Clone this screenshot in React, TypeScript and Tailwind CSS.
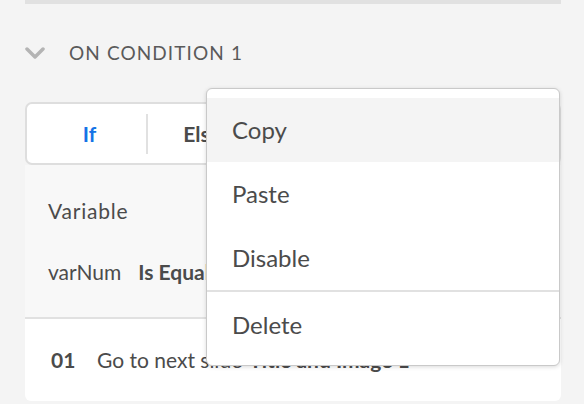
import React from 'react';

const font = { fontFamily: 'Lato, "Open Sans", sans-serif' };

function Chevron() {
  return (
    <svg width="20" height="12" viewBox="0 0 20 12" className="shrink-0">
      <polyline points="2,2 10,10 18,2" fill="none" stroke="#b4b4b4" strokeWidth="3.5" strokeLinecap="round" strokeLinejoin="round" />
    </svg>
  );
}

const menuItems = ['Copy', 'Paste', 'Disable'];

export default function App() {
  return (
    <div className="relative w-[584px] h-[404px] overflow-hidden bg-[#f4f4f4] text-[#4b4b4b]" style={font}>
      {/* top strip */}
      <div className="ml-[25px] w-[536px] h-[4px] bg-[#e1e1e1]" />

      {/* section header */}
      <div className="flex items-center h-[98px] pl-[25px] gap-[24px]">
        <Chevron />
        <span className="text-[19px] tracking-[1.1px] text-[#5a5a5a]">ON CONDITION 1</span>
      </div>

      {/* card */}
      <div className="ml-[25px] w-[536px]">
        <div className="flex items-center h-[63px] bg-white border-2 border-[#dedede] rounded-[7px]">
          <div className="w-[119px] pl-[6px] text-center text-[21px] font-bold text-[#1473e6]">If</div>
          <div className="w-[2px] h-[40px] bg-[#e1e1e1]" />
          <div className="w-[108px] text-center text-[21px] font-bold text-[#4b4b4b]">Else</div>
          <div className="w-[2px] h-[40px] bg-[#e1e1e1]" />
        </div>

        <div className="h-[154px] bg-[#f8f8f8] border-b-2 border-[#e1e1e1] pl-[23px] flex flex-col">
          <div className="mt-[32px] text-[21px] tracking-[0.8px] leading-[28px]">Variable</div>
          <div className="mt-[33px] flex items-center gap-[17px] text-[21px] leading-[28px]">
            <span>varNum</span>
            <span className="font-bold">Is Equal To</span>
            <span>5</span>
          </div>
        </div>

        <div className="h-[82px] bg-white rounded-b-[6px] flex items-center pl-[26px] text-[21px]">
          <span className="font-bold w-[46px]">01</span>
          <span>Go to next slide</span>
          <span className="font-bold ml-[7px]">Title and Image 1</span>
        </div>
      </div>

      {/* context menu */}
      <div className="absolute left-[206px] top-[88px] w-[354px] bg-white border border-[#c9c9c9] rounded-[6px] shadow-[0_1px_4px_rgba(0,0,0,0.15)] pt-[9px] pb-[8px] text-[24px] text-[#4b4b4b]">
        {menuItems.map((item, i) => (
          <div
            key={item}
            className={
              i === 0
                ? 'h-[64px] flex items-center pl-[25px] bg-[#f4f4f4]'
                : 'h-[64px] flex items-center pl-[25px]'
            }
          >
            {item}
          </div>
        ))}
        <div className="h-[2px] bg-[#e1e1e1]" />
        <div className="h-[65px] flex items-center pl-[25px]">Delete</div>
      </div>
    </div>
  );
}
